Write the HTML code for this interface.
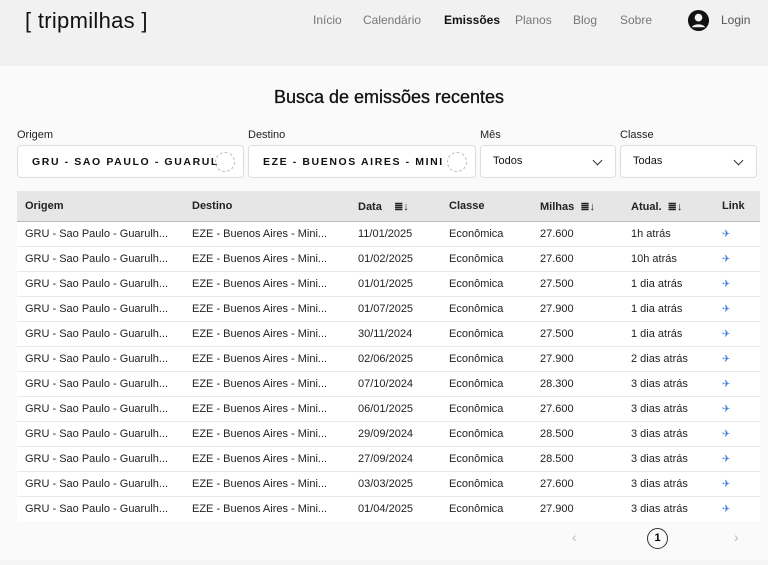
<!DOCTYPE html><html><head><style>
body{margin:0;width:768px;height:565px;background:#f5f5f5;font-family:"Liberation Sans",sans-serif;overflow:hidden;position:relative}
.hdr{position:absolute;left:0;top:0;width:768px;height:66px;background:#f1f1f1}
.logo{position:absolute;left:25px;top:8px;font-size:22px;color:#111;letter-spacing:0.3px}
.nav{position:absolute;top:13px;font-size:12px;color:#777}
.main{position:absolute;left:0;top:66px;width:768px;height:494px;background:#fafafa}
h1{position:absolute;left:0;width:778px;top:87px;margin:0;text-align:center;font-size:18px;font-weight:normal;color:#111;-webkit-text-stroke:0.3px #111}
.lbl{position:absolute;top:129px;font-size:11px;color:#222}
.box{position:absolute;top:145px;height:33px;background:#fff;border:1px solid #ddd;border-radius:4px;box-sizing:border-box;font-size:11px;color:#111}
.box b{position:absolute;left:14px;top:10px;letter-spacing:1.6px;font-size:10.5px;white-space:nowrap;overflow:hidden;width:190px}
.box span{position:absolute;left:12px;top:9px}
.chev{position:absolute;right:14px;top:11px;width:6px;height:6px;border-right:1.3px solid #333;border-bottom:1.3px solid #333;transform:rotate(45deg)}
.spin{position:absolute;right:8px;top:6px;width:18px;height:18px;border:1.5px dashed #bbb;border-radius:50%}
table{position:absolute;left:17px;top:191px;width:743px;border-collapse:collapse;font-size:11px;color:#222;background:#fff}
th{background:#e6e6e6;height:30px;text-align:left;font-weight:bold;font-size:11px;border-bottom:1px solid #bbb;padding:0 0 0 8px}
td{height:24px;border-bottom:1px solid #e8e8e8;padding:0 0 0 8px;white-space:nowrap}
.pl{color:#3a7bd5;font-size:10px}
.pg{position:absolute;left:647px;top:528px;width:19px;height:19px;border:1.3px solid #333;border-radius:50%;text-align:center;line-height:19px;font-size:11px;font-weight:bold}
</style></head><body>
<div class="hdr"></div>
<div class="logo">[ tripmilhas ]</div>
<div class="nav" style="left:313px">Início</div>
<div class="nav" style="left:363px">Calendário</div>
<div class="nav" style="left:444px;color:#111;font-weight:bold">Emissões</div>
<div class="nav" style="left:515px">Planos</div>
<div class="nav" style="left:573px">Blog</div>
<div class="nav" style="left:620px">Sobre</div>
<svg style="position:absolute;left:687px;top:9px" width="23" height="23" viewBox="0 0 24 24"><circle cx="12" cy="12" r="11" fill="#111"/><circle cx="12" cy="9" r="4" fill="#f1f1f1"/><path d="M5 19c2-4 12-4 14 0" fill="#f1f1f1"/></svg>
<div class="nav" style="left:721px;color:#555">Login</div>
<div class="main"></div>
<h1>Busca de emissões recentes</h1>
<div class="lbl" style="left:17px">Origem</div><div class="lbl" style="left:248px">Destino</div><div class="lbl" style="left:480px">Mês</div><div class="lbl" style="left:620px">Classe</div>
<div class="box" style="left:17px;width:227px"><b>GRU - SAO PAULO - GUARUL</b><div class="spin"></div></div>
<div class="box" style="left:248px;width:228px"><b>EZE - BUENOS AIRES - MINI</b><div class="spin"></div></div>
<div class="box" style="left:480px;width:136px"><span>Todos</span><div class="chev"></div></div>
<div class="box" style="left:620px;width:137px"><span>Todas</span><div class="chev"></div></div>
<table>
<tr><th style="width:159px">Origem</th><th style="width:158px">Destino</th><th style="width:83px">Data &nbsp;&nbsp;&nbsp;≣↓</th><th style="width:83px">Classe</th><th style="width:83px">Milhas &nbsp;≣↓</th><th style="width:83px">Atual. &nbsp;≣↓</th><th>Link</th></tr>
<tr><td>GRU - Sao Paulo - Guarulh...</td><td>EZE - Buenos Aires - Mini...</td><td>11/01/2025</td><td>Econômica</td><td>27.600</td><td>1h atrás</td><td class="pl">✈</td></tr>
<tr><td>GRU - Sao Paulo - Guarulh...</td><td>EZE - Buenos Aires - Mini...</td><td>01/02/2025</td><td>Econômica</td><td>27.600</td><td>10h atrás</td><td class="pl">✈</td></tr>
<tr><td>GRU - Sao Paulo - Guarulh...</td><td>EZE - Buenos Aires - Mini...</td><td>01/01/2025</td><td>Econômica</td><td>27.500</td><td>1 dia atrás</td><td class="pl">✈</td></tr>
<tr><td>GRU - Sao Paulo - Guarulh...</td><td>EZE - Buenos Aires - Mini...</td><td>01/07/2025</td><td>Econômica</td><td>27.900</td><td>1 dia atrás</td><td class="pl">✈</td></tr>
<tr><td>GRU - Sao Paulo - Guarulh...</td><td>EZE - Buenos Aires - Mini...</td><td>30/11/2024</td><td>Econômica</td><td>27.500</td><td>1 dia atrás</td><td class="pl">✈</td></tr>
<tr><td>GRU - Sao Paulo - Guarulh...</td><td>EZE - Buenos Aires - Mini...</td><td>02/06/2025</td><td>Econômica</td><td>27.900</td><td>2 dias atrás</td><td class="pl">✈</td></tr>
<tr><td>GRU - Sao Paulo - Guarulh...</td><td>EZE - Buenos Aires - Mini...</td><td>07/10/2024</td><td>Econômica</td><td>28.300</td><td>3 dias atrás</td><td class="pl">✈</td></tr>
<tr><td>GRU - Sao Paulo - Guarulh...</td><td>EZE - Buenos Aires - Mini...</td><td>06/01/2025</td><td>Econômica</td><td>27.600</td><td>3 dias atrás</td><td class="pl">✈</td></tr>
<tr><td>GRU - Sao Paulo - Guarulh...</td><td>EZE - Buenos Aires - Mini...</td><td>29/09/2024</td><td>Econômica</td><td>28.500</td><td>3 dias atrás</td><td class="pl">✈</td></tr>
<tr><td>GRU - Sao Paulo - Guarulh...</td><td>EZE - Buenos Aires - Mini...</td><td>27/09/2024</td><td>Econômica</td><td>28.500</td><td>3 dias atrás</td><td class="pl">✈</td></tr>
<tr><td>GRU - Sao Paulo - Guarulh...</td><td>EZE - Buenos Aires - Mini...</td><td>03/03/2025</td><td>Econômica</td><td>27.600</td><td>3 dias atrás</td><td class="pl">✈</td></tr>
<tr><td style="border:0">GRU - Sao Paulo - Guarulh...</td><td style="border:0">EZE - Buenos Aires - Mini...</td><td style="border:0">01/04/2025</td><td style="border:0">Econômica</td><td style="border:0">27.900</td><td style="border:0">3 dias atrás</td><td class="pl" style="border:0">✈</td></tr>
</table>
<div style="position:absolute;left:572px;top:529px;color:#bbb;font-size:14px">‹</div>
<div class="pg">1</div>
<div style="position:absolute;left:734px;top:529px;color:#bbb;font-size:14px">›</div>
</body></html>
